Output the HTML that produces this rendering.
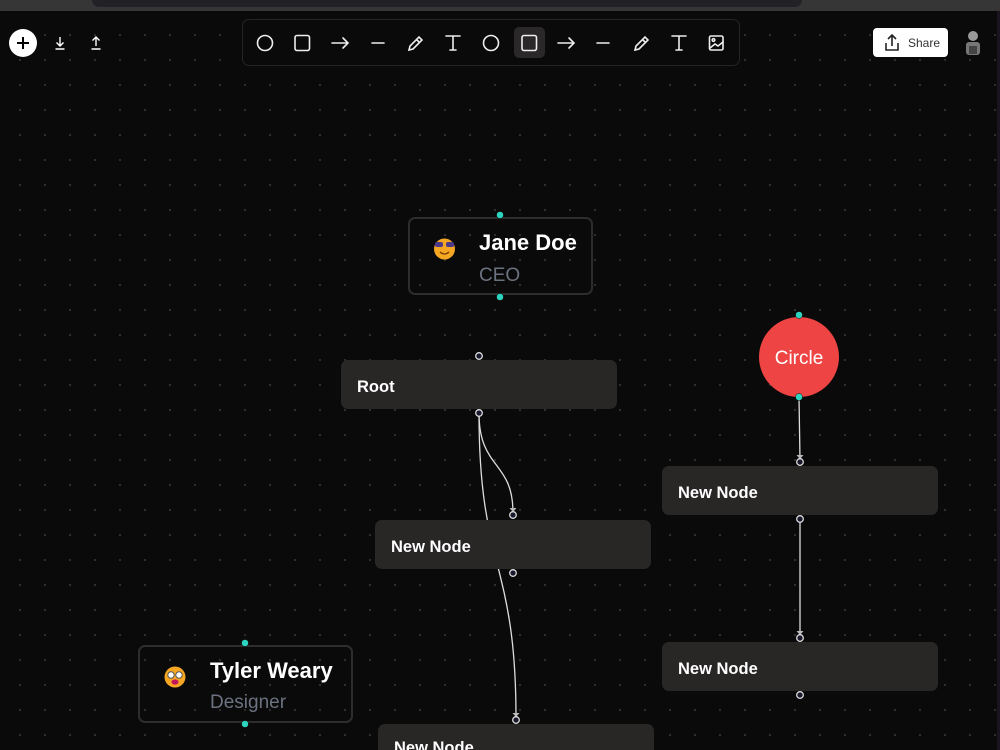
<!DOCTYPE html>
<html><head><meta charset="utf-8"><style>
*{margin:0;padding:0;box-sizing:border-box}
html,body{width:1000px;height:750px;overflow:hidden}
body{background:#0b0a0a;font-family:"Liberation Sans",sans-serif;position:relative}
.grid{position:absolute;left:0;top:11px;width:1000px;height:739px;background-image:radial-gradient(circle,#353535 0.8px,transparent 1.2px);background-size:25px 25px;background-position:7.5px -13.5px}
.abs{position:absolute}
.node{position:absolute;background:#292626;border-radius:7px;color:#fff;font-weight:bold;font-size:16.5px;padding-left:16px;padding-top:5px;display:flex;align-items:center}
.card{position:absolute;border:2px solid #2e2c2c;border-radius:7px}
.name{position:absolute;color:#fff;font-weight:bold;font-size:22px}
.sub{position:absolute;color:#6b7280;font-size:19px}
.tb{position:absolute;left:242px;top:19px;width:498px;height:47px;border:1.5px solid #262424;border-radius:7px;background:#0b0a0a}
</style></head><body>
<div class="abs" style="left:0;top:0;width:1000px;height:11px;background:#363636"></div>
<div class="abs" style="left:92px;top:0;width:710px;height:7px;background:#222226;border-radius:0 0 10px 10px"></div>
<div class="grid"></div>
<div class="abs" style="left:997px;top:11px;width:3px;height:739px;background:#1b1420"></div>

<svg class="abs" style="left:0;top:0" width="1000" height="750">
 <circle cx="23" cy="43" r="14" fill="#fff"/>
 <path d="M23 37v12M17 43h12" stroke="#000" stroke-width="2"/>
 <g stroke="#fff" stroke-width="1.4" fill="none">
  <path d="M60 37v9M56.5 42.5l3.5 3.5 3.5-3.5M55.5 49h9"/>
  <path d="M96 46v-9M92.5 40.5l3.5-3.5 3.5 3.5M91.5 49h9"/>
 </g>
</svg>

<div class="tb"></div>
<div class="abs" style="left:514px;top:27px;width:31px;height:31px;background:#2a2828;border-radius:5px"></div>
<svg class="abs" style="left:0;top:0" width="1000" height="80">
 <g stroke="#eee" stroke-width="1.6" fill="none" stroke-linecap="round">
  <circle cx="265" cy="43" r="7.5"/>
  <rect x="295" y="35.5" width="14.5" height="15" rx="2"/>
  <path d="M332 43h16M343 38l5 5-5 5"/>
  <path d="M372 43h12"/>
  <path d="M409 50l1-4 9-9 3 3-9 9z M416.5 39.5l3 3"/>
  <path d="M446 36h14M453 36v14M450 50h6"/>
  <circle cx="491" cy="43" r="7.5"/>
  <rect x="522" y="35.5" width="14.5" height="15" rx="2"/>
  <path d="M558 43h16M569 38l5 5-5 5"/>
  <path d="M597 43h12"/>
  <path d="M635 50l1-4 9-9 3 3-9 9z M642.5 39.5l3 3"/>
  <path d="M672 36h14M679 36v14M676 50h6"/>
  <rect x="709.5" y="36" width="13.5" height="14" rx="1.5"/>
  <circle cx="713.5" cy="40" r="1.3"/>
  <path d="M710 48l5-4 3 2 5-4"/>
 </g>
</svg>

<div class="abs" style="left:873px;top:28px;width:75px;height:29px;background:#fff;border-radius:4px"></div>
<svg class="abs" style="left:880px;top:31px" width="24" height="24"><g stroke="#222" stroke-width="1.6" fill="none"><path d="M12 4v11M8 8l4-4 4 4M6 12v7h12v-7"/></g></svg>
<div class="abs" style="left:908px;top:36px;font-size:12px;color:#333">Share</div>
<svg class="abs" style="left:962px;top:28px" width="22" height="28"><circle cx="11" cy="8" r="5" fill="#999"/><rect x="4" y="14" width="14" height="13" rx="3" fill="#777"/><rect x="7" y="18" width="8" height="8" fill="#444"/></svg>

<svg class="abs" style="left:0;top:0" width="1000" height="750">
 <g stroke="#ddd" stroke-width="1.3" fill="none">
  <path d="M479 413 C479 470 513 460 513 513"/>
  <path d="M479 413 C479 570 516 560 516 718"/>
  <path d="M799 397 L800 460"/>
  <path d="M800 519 L800 636"/>
 </g>
 <g fill="#bbb"><path d="M509.5 508h7l-3.5 4z"/><path d="M512.5 713h7l-3.5 4z"/><path d="M796.5 455h7l-3.5 4z"/><path d="M796.5 631h7l-3.5 4z"/></g>
</svg>

<div class="card" style="left:408px;top:217px;width:185px;height:78px"></div>
<svg class="abs" style="left:433px;top:236px" width="23" height="24"><circle cx="11.5" cy="13" r="10.5" fill="#f5a623"/><rect x="2" y="6" width="8" height="5" rx="2" fill="#4b3a8a"/><rect x="13" y="6" width="8" height="5" rx="2" fill="#4b3a8a"/><path d="M7 16q4.5 4 9 0" stroke="#7a3b00" stroke-width="1.3" fill="none"/></svg>
<div class="name" style="left:479px;top:230px">Jane Doe</div>
<div class="sub" style="left:479px;top:265px">CEO</div>

<div class="card" style="left:138px;top:645px;width:215px;height:78px"></div>
<svg class="abs" style="left:164px;top:666px" width="22" height="22"><circle cx="11" cy="11" r="10.5" fill="#f5a623"/><circle cx="7" cy="9" r="3.2" fill="#fff" stroke="#555"/><circle cx="15" cy="9" r="3.2" fill="#fff" stroke="#555"/><ellipse cx="11" cy="16" rx="3.5" ry="2.6" fill="#c2185b"/></svg>
<div class="name" style="left:210px;top:658px">Tyler Weary</div>
<div class="sub" style="left:210px;top:692px">Designer</div>

<div class="node" style="left:341px;top:360px;width:276px;height:49px">Root</div>
<div class="node" style="left:375px;top:520px;width:276px;height:49px">New Node</div>
<div class="node" style="left:378px;top:724px;width:276px;height:49px;align-items:flex-start;padding-top:15px">New Node</div>
<div class="node" style="left:662px;top:466px;width:276px;height:49px">New Node</div>
<div class="node" style="left:662px;top:642px;width:276px;height:49px">New Node</div>

<div class="abs" style="left:759px;top:317px;width:80px;height:80px;border-radius:50%;background:#ef4444;color:#fff;font-size:19px;display:flex;align-items:center;justify-content:center;padding-top:3px">Circle</div>

<svg class="abs" style="left:0;top:0" width="1000" height="750">
 <g fill="#2dd4bf" stroke="#0b0a0a" stroke-width="0.5">
  <circle cx="500" cy="215" r="3.5"/><circle cx="500" cy="297" r="3.5"/>
  <circle cx="799" cy="315" r="3.5"/><circle cx="799" cy="397" r="3.5"/>
  <circle cx="245" cy="643" r="3.5"/><circle cx="245" cy="724" r="3.5"/>
 </g>
 <g fill="#1a1a2e" stroke="#ddd" stroke-width="1.3">
  <circle cx="479" cy="356" r="3.3"/><circle cx="479" cy="413" r="3.3"/>
  <circle cx="513" cy="515" r="3.3"/><circle cx="513" cy="573" r="3.3"/>
  <circle cx="516" cy="720" r="3.3"/>
  <circle cx="800" cy="462" r="3.3"/><circle cx="800" cy="519" r="3.3"/>
  <circle cx="800" cy="638" r="3.3"/><circle cx="800" cy="695" r="3.3"/>
 </g>
</svg>
</body></html>
